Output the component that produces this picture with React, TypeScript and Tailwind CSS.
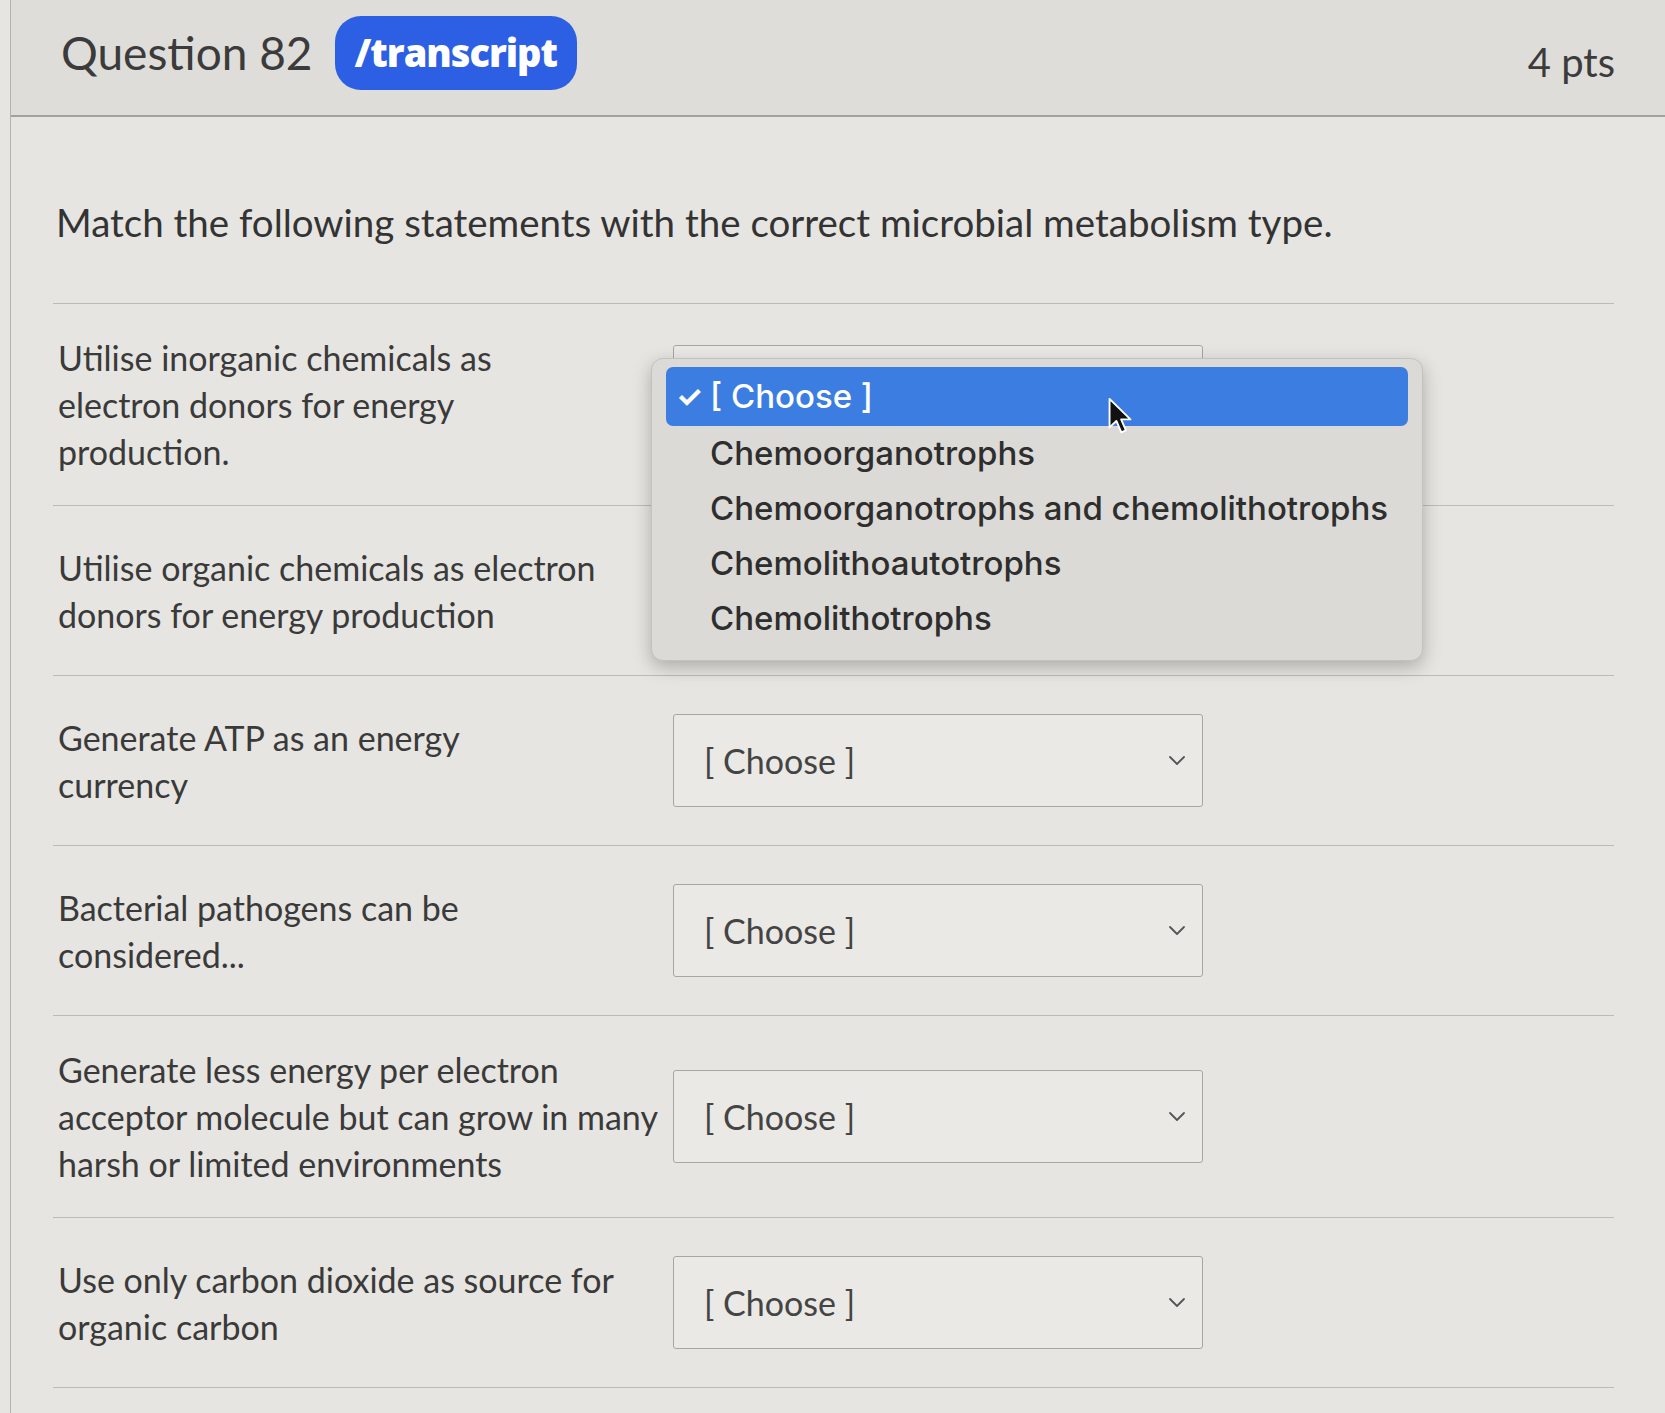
import React from 'react';

const rows: string[][] = [
  ['Utilise inorganic chemicals as', 'electron donors for energy', 'production.'],
  ['Utilise organic chemicals as electron', 'donors for energy production'],
  ['Generate ATP as an energy', 'currency'],
  ['Bacterial pathogens can be', 'considered...'],
  ['Generate less energy per electron', 'acceptor molecule but can grow in many', 'harsh or limited environments'],
  ['Use only carbon dioxide as source for', 'organic carbon'],
];

const options = [
  'Chemoorganotrophs',
  'Chemoorganotrophs and chemolithotrophs',
  'Chemolithoautotrophs',
  'Chemolithotrophs',
];

function Chevron() {
  return (
    <svg width="18" height="11" viewBox="0 0 18 11" fill="none" className="text-[#555]">
      <path d="M2 2 L9 9 L16 2" stroke="currentColor" strokeWidth="1.8" strokeLinecap="round" strokeLinejoin="round" />
    </svg>
  );
}

function Cursor() {
  return (
    <svg width="26" height="38" viewBox="0 0 13 20" className="absolute left-[441px] top-[30px]">
      <path d="M1 1 L1 16 L4.6 12.6 L7.2 18.6 L9.6 17.6 L7.1 11.8 L12 11.8 Z" fill="#111" stroke="#fff" strokeWidth="1" strokeLinejoin="round" />
    </svg>
  );
}

function Dropdown() {
  return (
    <div className="absolute left-[-22px] top-[13px] z-10 w-[772px] rounded-[12px] border border-[#c4c2be] bg-[#dcdad6] pb-[14px] pt-[8px] font-['Inter',sans-serif] text-[33px] font-medium text-[#2e2e2e] shadow-[0_6px_18px_rgba(0,0,0,0.25)]">
      <div className="relative mx-[14px] flex h-[59px] items-center rounded-[7px] bg-[#3c7de2] text-white">
        <span className="w-[44px] pl-[10px] text-[30px] font-bold">✓</span>
        <span>[ Choose ]</span>
        <Cursor />
      </div>
      {options.map((o) => (
        <div key={o} className="flex h-[55px] items-center pl-[58px]">
          {o}
        </div>
      ))}
    </div>
  );
}

function Select({ open }: { open?: boolean }) {
  return (
    <div className={open ? 'relative -mt-[26px]' : 'relative'}>
      <div className="flex h-[93px] w-[530px] items-center justify-between rounded-[3px] border border-[#a8a6a2] bg-[#eae9e5] pl-[30px] pr-[16px]">
        {open ? <span /> : <span className="text-[34px] text-[#444]">[ Choose ]</span>}
        <Chevron />
      </div>
      {open && <Dropdown />}
    </div>
  );
}

export default function App() {
  return (
    <div className="h-[1413px] w-[1665px] overflow-hidden bg-[#e6e5e1] font-['Lato',sans-serif] text-[#3a3a3a]">
      <div className="ml-[10px] h-full border-l border-[#b4b2ad]">
        {/* header */}
        <div className="flex h-[117px] items-center justify-between border-b-2 border-[#a3a19c] bg-[#dfddd9] pb-[10px] pl-[50px] pr-[50px]">
          <div className="flex items-center gap-[22px]">
            <span className="text-[46px] text-[#3b3b3b]">Question 82</span>
            <span className="flex h-[74px] items-center rounded-[26px] bg-[#2c5fe4] px-[20px] font-['Open_Sans',sans-serif] text-[38px] font-extrabold tracking-[-1px] text-white">
              /transcript
            </span>
          </div>
          <span className="mt-[18px] text-[40px] text-[#3b3b3b]">4 pts</span>
        </div>

        {/* body */}
        <div className="pl-[42px] pr-[51px]">
          <div className="border-b border-[#bdbbb6] pb-[58px] pl-[3px] pt-[82px] text-[38.5px] leading-[46px] text-[#333]">
            Match the following statements with the correct microbial metabolism type.
          </div>

          {rows.map((lines, i) => (
            <div key={i} className="flex min-h-[170px] items-center border-b border-[#bdbbb6] py-[30px]">
              <div className="w-[620px] shrink-0 pl-[5px] text-[34px] leading-[47px]">
                {lines.map((l, j) => (
                  <div key={j} className="whitespace-nowrap">
                    {l}
                  </div>
                ))}
              </div>
              {i !== 1 && <Select open={i === 0} />}
            </div>
          ))}
        </div>
      </div>
    </div>
  );
}
